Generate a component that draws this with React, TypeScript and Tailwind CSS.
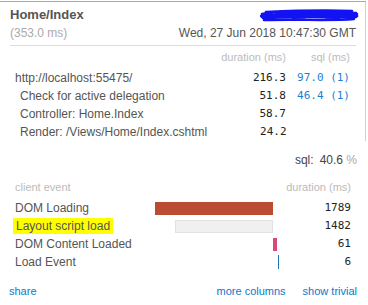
import React from "react";

const serverRows = [
  { label: "http://localhost:55475/", indent: false, dur: "216.3", sql: "97.0 (1)" },
  { label: "Check for active delegation", indent: true, dur: "51.8", sql: "46.4 (1)" },
  { label: "Controller: Home.Index", indent: true, dur: "58.7", sql: "" },
  { label: "Render: /Views/Home/Index.cshtml", indent: true, dur: "24.2", sql: "" },
];

// timeline area starts at x=140 (page coords)
const clientRows = [
  { label: "DOM Loading", dur: "1789", left: 15, width: 118, kind: "dom", hl: false },
  { label: "Layout script load", dur: "1482", left: 35, width: 98, kind: "script", hl: true },
  { label: "DOM Content Loaded", dur: "61", left: 133, width: 4, kind: "dcl", hl: false },
  { label: "Load Event", dur: "6", left: 138, width: 1, kind: "load", hl: false },
];

function Bar({ kind, left, width }: { kind: string; left: number; width: number }) {
  const style = { left: `${left}px`, width: `${width}px` };
  if (kind === "dom")
    return <div className="absolute top-[1px] h-[13px] bg-[#bc4b34]" style={style} />;
  if (kind === "script")
    return (
      <div
        className="absolute top-[1px] h-[13px] bg-[#f0f0f0] border border-[#e2e2e2]"
        style={style}
      />
    );
  if (kind === "dcl")
    return <div className="absolute top-[1px] h-[13px] bg-[#d9487a]" style={style} />;
  return <div className="absolute top-[0px] h-[14px] bg-[#1a73b8]" style={style} />;
}

export default function App() {
  return (
    <div className="w-[368px] h-[305px] bg-white overflow-hidden font-['Liberation_Sans',Arial,sans-serif] text-[12px] text-[#555]">
      <div className="mt-px w-[366px] border-t border-[#a9a9a9]">
        <div className="border-r border-[#d0d0d0] pl-[10px] pr-[9px] pt-[4px]">
          <div className="flex h-[18px] items-center justify-between">
            <span className="text-[13px] font-bold text-[#555]">Home/Index</span>
            <svg width="99" height="15" viewBox="0 0 99 15" className="mr-[-3px]">
              <path
                d="M2 6 C20 2 50 3 96 5 M1 8 C30 5 60 4 95 7 M3 10 C30 8 70 9 96 9 M4 12 C40 11 70 13 94 11 M6 4 C30 3 60 2 92 3 M2 9 L20 6 L35 10 L52 5 L68 10 L84 6 L96 9 M8 11 L25 5 L40 11 L58 4 L75 11 L90 5 L97 8 M10 7 C40 6 70 8 97 6"
                stroke="#1212f2"
                strokeWidth="2.6"
                fill="none"
                strokeLinecap="round"
              />
            </svg>
          </div>
          <div className="flex h-[18px] items-center justify-between">
            <span className="text-[#aaa]">(353.0 ms)</span>
            <span className="text-[#555]">Wed, 27 Jun 2018 10:47:30 GMT</span>
          </div>
          <div className="h-[3px] border-b border-[#dcdcdc] box-content" />

          <div className="pl-[5px] pr-[6px] mt-[2px]">
            <div className="flex h-[18px] items-center text-[11px] text-[#bbb]">
              <div className="flex-1" />
              <div className="w-[80px] text-right">duration (ms)</div>
              <div className="w-[64px] text-right">sql (ms)</div>
            </div>
            <div className="mt-[3px] flex flex-col">
              {serverRows.map((r) => (
                <div key={r.label} className="flex h-[18px] items-center">
                  <div className={`flex-1 whitespace-nowrap ${r.indent ? "pl-[5px]" : ""}`}>{r.label}</div>
                  <div className="w-[80px] text-right font-['DejaVu_Sans_Mono',monospace] text-[11px] text-[#222]">
                    {r.dur}
                  </div>
                  <div className="w-[64px] text-right font-['DejaVu_Sans_Mono',monospace] text-[11px] text-[#1a7fd4]">
                    {r.sql}
                  </div>
                </div>
              ))}
            </div>
          </div>
        </div>

        <div className="pl-[10px] pr-[9px]">
          <div className="mt-[10px] flex h-[18px] items-center justify-end gap-[6px]">
            <span className="text-[#444]">sql:</span>
            <span>
              <span className="text-[#444]">40.6</span> <span className="text-[#aaa]">%</span>
            </span>
          </div>

          <div className="pl-[5px] pr-[6px] mt-[9px]">
            <div className="flex h-[18px] items-center justify-between text-[11px] text-[#bbb]">
              <span>client event</span>
              <span>duration (ms)</span>
            </div>
            <div className="mt-[3px] flex flex-col">
              {clientRows.map((r) => (
                <div key={r.label} className="flex h-[18px] items-center">
                  <div className="w-[125px] whitespace-nowrap">
                    {r.hl ? (
                      <span className="ml-[-2px] bg-[#ffff00] px-[3px] py-[1px]">{r.label}</span>
                    ) : (
                      r.label
                    )}
                  </div>
                  <div className="relative h-[15px] w-[150px]">
                    <Bar kind={r.kind} left={r.left} width={r.width} />
                  </div>
                  <div className="flex-1 text-right font-['DejaVu_Sans_Mono',monospace] text-[11px] text-[#222]">
                    {r.dur}
                  </div>
                </div>
              ))}
            </div>
          </div>

          <div className="mt-[11px] flex h-[18px] items-center text-[11px] text-[#0a78cc]">
            <span className="ml-[-1px]">share</span>
            <span className="ml-auto mr-[1px]">more columns</span>
            <span className="ml-[16px]">show trivial</span>
          </div>
        </div>
      </div>
    </div>
  );
}
